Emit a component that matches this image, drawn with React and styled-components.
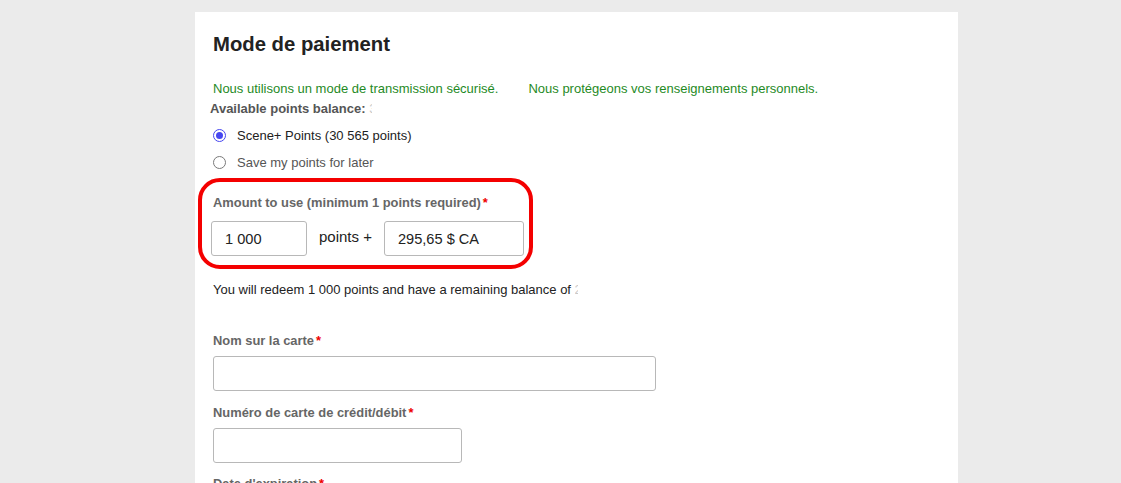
import React, { useState } from 'react'
import styled, { createGlobalStyle } from 'styled-components'

const GlobalStyle = createGlobalStyle`
  body {
    margin: 0;
    background: #ebebeb;
    font-family: 'Liberation Sans', Arial, sans-serif;
  }
`

const Page = styled.div`
  padding: 12px 163px 0 195px;
  height: 483px;
  box-sizing: border-box;
  overflow: hidden;
`

const Card = styled.div`
  background: #fff;
  padding: 20px 18px 40px;
  min-height: 600px;
`

const Title = styled.h2`
  margin: 0;
  font-size: 20.3px;
  line-height: 24px;
  font-weight: bold;
  color: #222;
`

const SecureRow = styled.div`
  display: flex;
  gap: 30px;
  margin-top: 23px;
  font-size: 13px;
  line-height: 20px;
  color: #1f8a1f;
`

const Balance = styled.div`
  margin-left: -3px;
  font-size: 13px;
  line-height: 19px;
  font-weight: bold;
  color: #555;
`

const Faded = styled.span`
  display: inline-block;
  width: ${({ w }) => w || 3}px;
  overflow: hidden;
  vertical-align: bottom;
  color: #c8c8c8;
  font-weight: normal;
`

const RadioRow = styled.label`
  display: flex;
  align-items: center;
  gap: 11px;
  margin-top: 7px;
  height: 20px;
  font-size: 13px;
  color: ${({ muted }) => (muted ? '#555' : '#222')};
  cursor: pointer;
`

const RadioDot = styled.span`
  width: 13px;
  height: 13px;
  box-sizing: border-box;
  border-radius: 50%;
  border: ${({ checked }) => (checked ? '1.5px solid #4747f0' : '1px solid #7a7a7a')};
  display: flex;
  align-items: center;
  justify-content: center;
  &::after {
    content: '';
    width: 7px;
    height: 7px;
    border-radius: 50%;
    background: ${({ checked }) => (checked ? '#4747f0' : 'transparent')};
  }
`

const Label = styled.div`
  margin-top: ${({ top }) => top}px;
  font-size: 12.9px;
  line-height: 20px;
  font-weight: bold;
  color: #666;
`

const Star = styled.span`
  color: #e00;
  margin-left: 2px;
`

const AmountGroup = styled.div`
  position: relative;
  width: fit-content;
  margin-top: 21px;
  &::after {
    content: '';
    position: absolute;
    top: -15px;
    bottom: -13px;
    left: -15px;
    right: -9px;
    border: 4px solid #f40000;
    border-radius: 22px;
    pointer-events: none;
  }
`

const AmountRow = styled.div`
  display: flex;
  align-items: center;
  margin: 8px 0 0 -2px;
`

const Join = styled.span`
  font-size: 15px;
  color: #222;
  padding: 0 12px;
  margin-top: -4px;
`

const Input = styled.input`
  display: block;
  box-sizing: border-box;
  width: ${({ w }) => w}px;
  height: 35px;
  margin-top: ${({ top }) => top || 0}px;
  padding: 0 13px;
  border: 1px solid #b8b8b8;
  border-radius: 3px;
  font-family: inherit;
  font-size: 14.6px;
  color: #222;
  background: #fff;
  outline: none;
`

const Note = styled.div`
  margin-top: 24px;
  font-size: 13px;
  line-height: 20px;
  color: #222;
`

export default function App() {
  const [choice, setChoice] = useState('scene')
  const [points, setPoints] = useState('1 000')
  const [cash, setCash] = useState('295,65 $ CA')

  return (
    <Page>
      <GlobalStyle />
      <Card>
        <Title>Mode de paiement</Title>
        <SecureRow>
          <span>Nous utilisons un mode de transmission sécurisé.</span>
          <span>Nous protégeons vos renseignements personnels.</span>
        </SecureRow>
        <Balance>
          Available points balance: <Faded w={3}>3</Faded>
        </Balance>
        <RadioRow onClick={() => setChoice('scene')}>
          <RadioDot checked={choice === 'scene'} />
          Scene+ Points (30 565 points)
        </RadioRow>
        <RadioRow muted onClick={() => setChoice('later')}>
          <RadioDot checked={choice === 'later'} />
          Save my points for later
        </RadioRow>

        <AmountGroup>
          <Label top={0}>
            Amount to use (minimum 1 points required)<Star>*</Star>
          </Label>
          <AmountRow>
            <Input w={96} value={points} onChange={e => setPoints(e.target.value)} />
            <Join>points +</Join>
            <Input w={140} value={cash} onChange={e => setCash(e.target.value)} />
          </AmountRow>
        </AmountGroup>

        <Note>
          You will redeem 1 000 points and have a remaining balance of <Faded w={3}>2</Faded>
        </Note>

        <Label top={31}>
          Nom sur la carte<Star>*</Star>
        </Label>
        <Input w={443} top={5} />

        <Label top={12}>
          Numéro de carte de crédit/débit<Star>*</Star>
        </Label>
        <Input w={249} top={5} />

        <Label top={11}>
          Date d'expiration<Star>*</Star>
        </Label>
      </Card>
    </Page>
  )
}
